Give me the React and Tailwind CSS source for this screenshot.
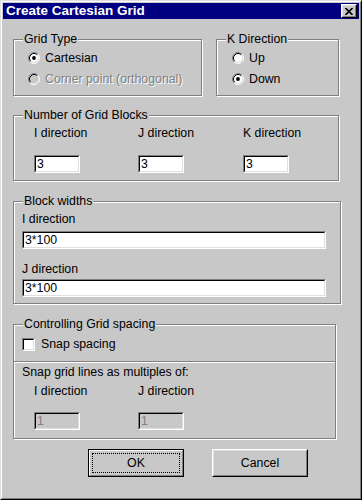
const Group = ({ title, className = '', children }) => {
  return (
    <div className={`flex flex-col border border-[#808080] shadow-[inset_1px_1px_0_#fff,1px_1px_0_#fff] ${className}`}>
      <span className="-mt-[8px] ml-[9px] w-fit bg-[#c8c8c8] px-px leading-[14px]">{title}</span>
      {children}
    </div>
  )
}

const Radio = ({ checked, disabled, label }) => {
  return (
    <div className="flex h-[16px] items-center gap-[5px]">
      <svg width="12" height="12" viewBox="0 0 12 12" className="shrink-0">
        <circle cx="6" cy="6" r="4.5" fill={disabled ? '#c8c8c8' : '#fff'} />
        <path d="M2.11 9.89 A5.5 5.5 0 0 1 9.89 2.11" fill="none" stroke="#808080" />
        <path d="M9.89 2.11 A5.5 5.5 0 0 1 2.11 9.89" fill="none" stroke="#fff" />
        <path d="M2.82 9.18 A4.5 4.5 0 0 1 9.18 2.82" fill="none" stroke="#000" />
        <path d="M9.18 2.82 A4.5 4.5 0 0 1 2.82 9.18" fill="none" stroke="#dfdfdf" />
        {checked && <circle cx="6" cy="6" r="1.9" fill="#000" />}
      </svg>
      <span className={disabled ? 'text-[#808080] [text-shadow:1px_1px_0_#fff]' : ''}>{label}</span>
    </div>
  )
}

const TextBox = ({ value, width, disabled }) => {
  return (
    <div className={`${width} h-[18px] border border-t-[#808080] border-l-[#808080] border-b-white border-r-white`}>
      <div
        className={`h-full border border-t-black border-l-black border-b-[#dfdfdf] border-r-[#dfdfdf] pl-px leading-[14px] ${
          disabled ? 'bg-[#c8c8c8] text-[#808080]' : 'bg-white'
        }`}
      >
        {value}
      </div>
    </div>
  )
}

const App = () => {
  return (
    <div className="h-[500px] w-[362px] border border-t-[#dfdfdf] border-l-[#dfdfdf] border-b-black border-r-black bg-[#c8c8c8] font-['Liberation_Sans',Arial,sans-serif] text-[12.3px] text-black">
      <div className="h-full border border-t-white border-l-white border-b-[#808080] border-r-[#808080] p-px">
        {/* title bar */}
        <div className="flex h-[16px] items-center bg-[#000080] pl-[3px] pr-[2px]">
          <span className="text-[13.5px] font-bold leading-[16px] text-white">Create Cartesian Grid</span>
          <div className="ml-auto h-[14px] w-[16px] border border-t-white border-l-white border-b-black border-r-black">
            <div className="flex h-full items-center justify-center border border-t-[#dfdfdf] border-l-[#dfdfdf] border-b-[#808080] border-r-[#808080] bg-[#c8c8c8]">
              <svg width="8" height="7" viewBox="0 0 8 7">
                <path d="M0.5 0 L7.5 7 M7.5 0 L0.5 7" stroke="#000" strokeWidth="1.6" />
              </svg>
            </div>
          </div>
        </div>

        <div className="flex flex-col items-start pl-[10px]">
          <div className="mt-[20px] flex">
            <Group title="Grid Type" className="h-[57px] w-[189px]">
              <div className="mt-[4px] flex flex-col gap-[5px] pl-[14px]">
                <Radio checked label="Cartesian" />
                <Radio disabled label="Corner point (orthogonal)" />
              </div>
            </Group>
            <Group title="K Direction" className="ml-[14px] h-[57px] w-[123px]">
              <div className="mt-[4px] flex flex-col gap-[5px] pl-[15px]">
                <Radio label="Up" />
                <Radio checked label="Down" />
              </div>
            </Group>
          </div>

          <Group title="Number of Grid Blocks" className="mt-[19px] w-[326px] pb-[7px]">
            <div className="mt-[4px] grid grid-cols-[104px_105px_104px] pl-[20px]">
              {['I direction', 'J direction', 'K direction'].map((label) => (
                <div key={label} className="flex flex-col">
                  <span className="leading-[14px]">{label}</span>
                  <div className="mt-[15px]">
                    <TextBox value="3" width="w-[46px]" />
                  </div>
                </div>
              ))}
            </div>
          </Group>

          <Group title="Block widths" className="mt-[20px] w-[328px] pb-[6px]">
            <div className="flex flex-col pl-[8px]">
              <span className="mt-[4px] leading-[14px]">I direction</span>
              <div className="mt-[5px]">
                <TextBox value="3*100" width="w-[304px]" />
              </div>
              <span className="mt-[13px] leading-[14px]">J direction</span>
              <div className="mt-[3px]">
                <TextBox value="3*100" width="w-[304px]" />
              </div>
            </div>
          </Group>

          <Group title="Controlling Grid spacing" className="mt-[20px] w-[323px] pb-[8px]">
            <div className="mt-[6px] flex h-[14px] items-center gap-[6px] pl-[8px]">
              <div className="h-[13px] w-[13px] border border-t-[#808080] border-l-[#808080] border-b-white border-r-white">
                <div className="h-full border border-t-black border-l-black border-b-[#dfdfdf] border-r-[#dfdfdf] bg-white" />
              </div>
              <span>Snap spacing</span>
            </div>
            <div className="mt-[10px] h-[2px] border-t border-b border-t-[#808080] border-b-white" />
            <span className="mt-[2px] pl-[8px] leading-[14px]">Snap grid lines as multiples of:</span>
            <div className="mt-[5px] grid grid-cols-[104px_104px] pl-[20px]">
              {['I direction', 'J direction'].map((label) => (
                <div key={label} className="flex flex-col">
                  <span className="leading-[14px]">{label}</span>
                  <div className="mt-[14px]">
                    <TextBox value="1" width="w-[46px]" disabled />
                  </div>
                </div>
              ))}
            </div>
          </Group>

          <div className="ml-[75px] mt-[10px] flex gap-[28px]">
            <div className="h-[28px] w-[96px] border border-black">
              <div className="h-full border border-t-white border-l-white border-b-[#808080] border-r-[#808080] p-[2px]">
                <div className="flex h-full items-center justify-center border border-dotted border-black">OK</div>
              </div>
            </div>
            <div className="h-[28px] w-[96px] border border-t-white border-l-white border-b-black border-r-black">
              <div className="flex h-full items-center justify-center border border-t-[#dfdfdf] border-l-[#dfdfdf] border-b-[#808080] border-r-[#808080]">
                Cancel
              </div>
            </div>
          </div>
        </div>
      </div>
    </div>
  )
}

export default App
